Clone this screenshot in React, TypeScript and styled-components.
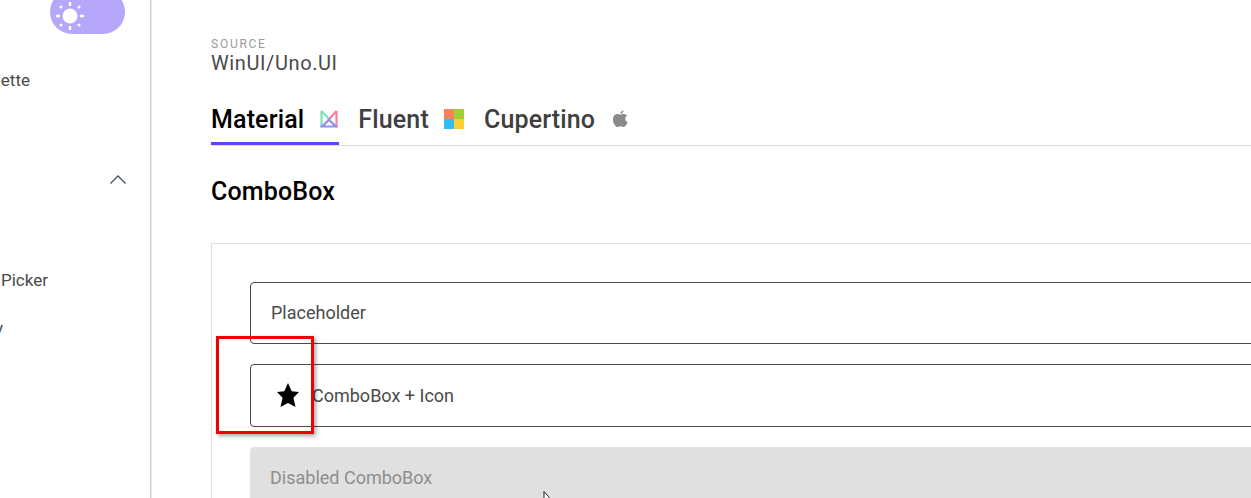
import React from 'react';
import styled, { createGlobalStyle } from 'styled-components';

const GlobalStyle = createGlobalStyle`
  html, body {
    margin: 0;
    padding: 0;
    background: #fff;
    overflow: hidden;
  }
  body {
    font-family: Roboto, "Liberation Sans", sans-serif;
  }
`;

const Page = styled.div`
  position: relative;
  display: flex;
  width: 1251px;
  height: 498px;
  overflow: hidden;
`;

const Sidebar = styled.aside`
  flex: 0 0 151px;
  box-sizing: border-box;
  height: 100%;
  border-right: 1px solid #cfcfcf;
  box-shadow: 1px 0 0 #ececec;
  overflow: hidden;
`;

const ThemeToggle = styled.div`
  display: flex;
  width: 75px;
  height: 44px;
  margin: -10px 0 0 50px;
  padding: 8px 0 0 2px;
  box-sizing: border-box;
  border-radius: 22px;
  background: #b6a7fb;
`;

const NavItem = styled.div<{ $top: number; $end: number }>`
  display: flex;
  justify-content: flex-end;
  height: 20px;
  line-height: 20px;
  margin-top: ${({ $top }) => $top}px;
  padding-right: ${({ $end }) => $end}px;
  font-size: 17px;
  color: #4a4a4a;
  white-space: nowrap;
`;

const Chevron = styled.svg`
  display: block;
  margin: 83px 0 0 109px;
`;

const Main = styled.main`
  flex: 1;
  min-width: 0;
  padding: 38px 0 0 60px;
  overflow: hidden;
`;

const SourceLabel = styled.div`
  font-size: 12px;
  line-height: 13px;
  letter-spacing: 1.75px;
  color: #9a9a9a;
`;

const SourceValue = styled.div`
  font-size: 20px;
  line-height: 24px;
  letter-spacing: 0.6px;
  color: #4a4a4a;
`;

const Tabs = styled.div`
  display: flex;
  height: 46px;
  margin-top: 24px;
  border-bottom: 1px solid #dcdcdc;
`;

const Tab = styled.div<{ $active?: boolean; $gap: number }>`
  display: flex;
  align-items: center;
  gap: ${({ $gap }) => $gap}px;
  height: 40px;
  padding-bottom: 3px;
  padding-right: ${({ $active }) => ($active ? 1 : 20)}px;
  margin-right: ${({ $active }) => ($active ? 19 : 0)}px;
  font-size: 25px;
  letter-spacing: 0.15px;
  font-weight: 500;
  color: ${({ $active }) => ($active ? '#000' : '#3f3f3f')};
  border-bottom: 3px solid ${({ $active }) => ($active ? '#5b47f0' : 'transparent')};
`;

const Heading = styled.h2`
  margin: 30px 0 0;
  font-size: 25px;
  line-height: 32px;
  letter-spacing: 0.15px;
  font-weight: 500;
  color: #000;
`;

const Panel = styled.section`
  display: flex;
  flex-direction: column;
  gap: 20px;
  width: 1200px;
  height: 400px;
  margin-top: 35px;
  padding: 38px 0 0 38px;
  box-sizing: border-box;
  border: 1px solid #e0e0e0;
`;

const Field = styled.div<{ $disabled?: boolean; $lift?: number }>`
  display: flex;
  align-items: center;
  flex: 0 0 auto;
  height: 62.4px;
  padding-left: ${({ $disabled }) => ($disabled ? 19 : 20)}px;
  padding-bottom: ${({ $lift }) => $lift ?? 0}px;
  box-sizing: border-box;
  border: 1px solid ${({ $disabled }) => ($disabled ? '#e0e0e0' : '#4a4a4a')};
  border-radius: 4px;
  background: ${({ $disabled }) => ($disabled ? '#e0e0e0' : '#fff')};
  font-size: 18px;
  color: ${({ $disabled }) => ($disabled ? '#8e8e8e' : '#4a4a4a')};
`;

const StarIcon = styled.svg`
  flex: 0 0 auto;
  margin: 0 13px 2px 6px;
`;

const Highlight = styled.div`
  position: absolute;
  left: 216px;
  top: 336px;
  width: 98px;
  height: 98px;
  box-sizing: border-box;
  border: 3px solid #f00000;
  box-shadow: 2px 2px 4px rgba(0, 0, 0, 0.35);
`;

const Cursor = styled.svg`
  position: absolute;
  left: 543px;
  top: 491px;
`;

const Sun = () => (
  <svg width="36" height="36" viewBox="0 0 36 36">
    <circle cx="18" cy="18" r="7.500" fill="#fff" />
    <g stroke="#fff" strokeWidth="2.400" strokeLinecap="butt">
      <path d="M18 4v4M18 28v4M4 18h4M28 18h4" />
    </g>
    <g fill="#fff">
      <circle cx="9" cy="9" r="1.500" />
      <circle cx="27" cy="9" r="1.500" />
      <circle cx="9" cy="27" r="1.500" />
      <circle cx="27" cy="27" r="1.500" />
    </g>
  </svg>
);

const UnoIcon = () => (
  <svg width="18" height="18" viewBox="0 0 18 18" fill="none" strokeWidth="2.200">
    <path d="M1.500 1v16" stroke="#7fe0bd" />
    <path d="M1.500 1l8.500 9" stroke="#7fe0bd" />
    <path d="M16.500 1v16" stroke="#fb7f9e" />
    <path d="M16.500 1L8 10.500" stroke="#fb7f9e" />
    <path d="M9 10L2 16.500h14z" stroke="#8f8ff0" />
  </svg>
);

const WindowsIcon = () => (
  <svg width="20" height="20" viewBox="0 0 20 20">
    <rect width="10" height="10" fill="#f8835a" />
    <rect x="10" width="10" height="10" fill="#a3cd3a" />
    <rect y="10" width="10" height="10" fill="#2fbdf3" />
    <rect x="10" y="10" width="10" height="10" fill="#fdcf36" />
  </svg>
);

const AppleIcon = () => (
  <svg width="17" height="20" viewBox="0 0 18 20" fill="#8a8a8a">
    <path d="M12.300 1c.1 1.300-1.400 3.500-3.400 3.400C8.700 2.800 10.500 1 12.300 1z" />
    <path d="M9 5.500c1-.1 2.200-.9 3.700-.8 1.400.1 2.500.7 3.200 1.800-2.800 1.800-2.300 5.500.6 6.800-.7 2.200-2.400 5.200-4.200 5.200-1.200 0-1.800-.8-3.200-.8s-2.200.8-3.300.8C3.600 18.500 1 14.200 1 10.500c0-3.500 2.200-5.700 4.600-5.700 1.400 0 2.500.7 3.400.7z" />
  </svg>
);

const App: React.FC = () => (
  <Page>
    <GlobalStyle />
    <Sidebar>
      <ThemeToggle>
        <Sun />
      </ThemeToggle>
      <NavItem $top={36} $end={120}>
        Color Palette
      </NavItem>
      <Chevron width="18" height="12" viewBox="0 0 18 12" fill="none" stroke="#44505c" strokeWidth="1.300">
        <path d="M1.500 10.500L9 3l7.500 7.500" />
      </Chevron>
      <NavItem $top={85} $end={102}>
        Color Picker
      </NavItem>
      <NavItem $top={28} $end={147}>
        Gallery
      </NavItem>
    </Sidebar>
    <Main>
      <SourceLabel>SOURCE</SourceLabel>
      <SourceValue>WinUI/Uno.UI</SourceValue>
      <Tabs>
        <Tab $active $gap={16}>
          Material
          <UnoIcon />
        </Tab>
        <Tab $gap={15}>
          Fluent
          <WindowsIcon />
        </Tab>
        <Tab $gap={17}>
          Cupertino
          <AppleIcon />
        </Tab>
      </Tabs>
      <Heading>ComboBox</Heading>
      <Panel>
        <Field $lift={2}>Placeholder</Field>
        <Field>
          <StarIcon width="22" height="24" viewBox="0 0 22 24">
            <path d="M11 0l3.700 8.200L22 9l-5.600 5.700L18.500 24 11 20 3.500 24l2.100-9.300L0 9l7.300-.8z" fill="#000" />
          </StarIcon>
          ComboBox + Icon
        </Field>
        <Field $disabled>Disabled ComboBox</Field>
      </Panel>
    </Main>
    <Highlight />
    <Cursor width="9" height="8" viewBox="0 0 9 8" fill="#fff" stroke="#222" strokeWidth="1">
      <path d="M1 .5v10l2.500-2.500h4z" />
    </Cursor>
  </Page>
);

export default App;
